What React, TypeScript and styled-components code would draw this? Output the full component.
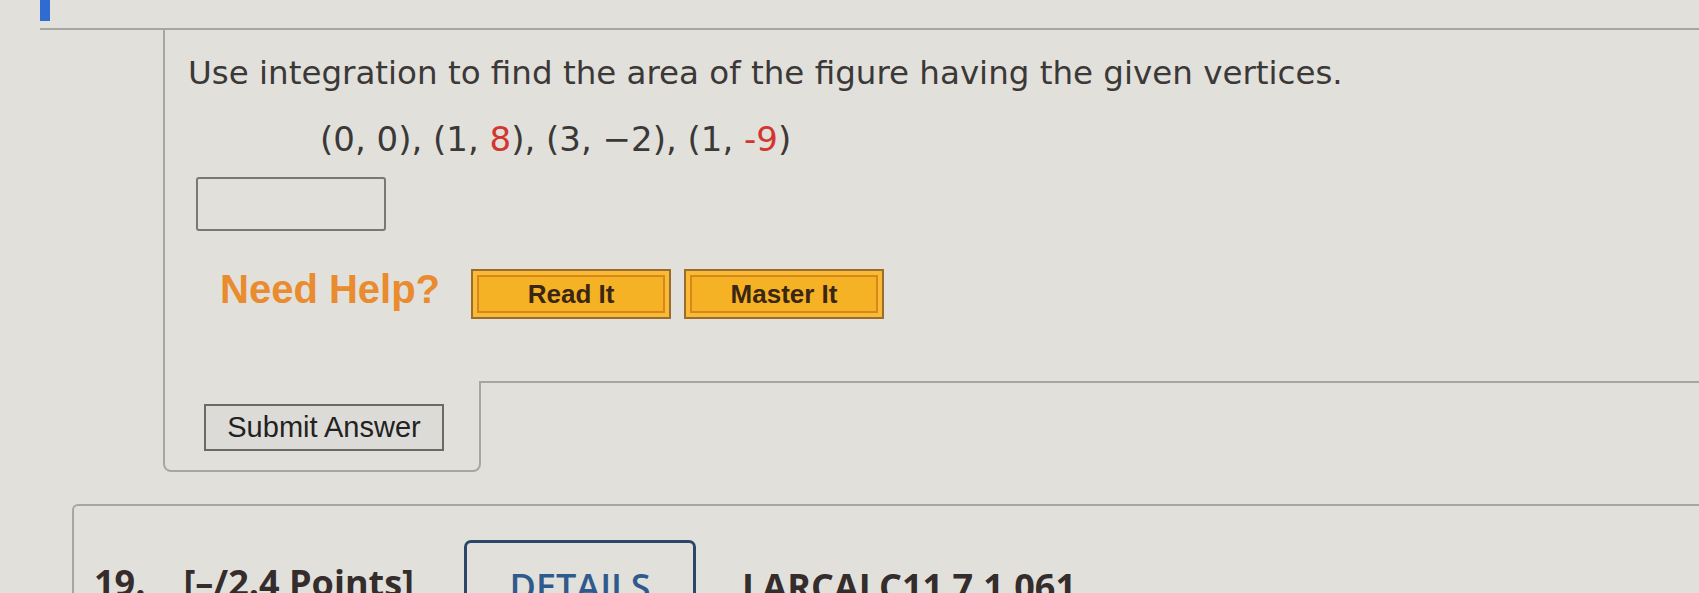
import styled, { createGlobalStyle } from "styled-components";

const GlobalStyle = createGlobalStyle`
  html, body {
    margin: 0;
    padding: 0;
    background: #e2e0db;
    overflow: hidden;
  }
`;

const Page = styled.div`
  width: 1699px;
  background: #e2e0db;
  display: flex;
  flex-direction: column;

  & > * {
    flex-shrink: 0;
  }
`;

const TopStrip = styled.div`
  height: 28px;
  margin-left: 40px;
  border-bottom: 2px solid #a8a6a2;
  display: flex;
`;

const BlueTab = styled.div`
  width: 10px;
  height: 21px;
  background: #2f6bd0;
`;

const QuestionArea = styled.div`
  margin-left: 163px;
  display: flex;
  flex-direction: column;
`;

const QuestionBody = styled.div`
  border-left: 2px solid #a8a6a2;
  border-bottom: 2px solid #a8a6a2;
  padding: 24px 0 62px 23px;
  display: flex;
  flex-direction: column;
  align-items: flex-start;
  font-family: "DejaVu Sans", Verdana, sans-serif;
  color: #3b3838;
`;

const Prompt = styled.p`
  margin: 0;
  font-size: 32.5px;
  line-height: 1.2;
`;

const Vertices = styled.p`
  margin: 26px 0 0 132px;
  font-size: 34px;
  line-height: 1.2;
`;

const Accent = styled.span`
  color: #d2362e;
`;

const AnswerInput = styled.input`
  margin: 17px 0 0 8px;
  width: 190px;
  height: 54px;
  box-sizing: border-box;
  border: 2px solid #7a7874;
  border-radius: 3px;
  background: transparent;
`;

const HelpRow = styled.div`
  margin: 36px 0 0 32px;
  display: flex;
  align-items: baseline;
  font-family: "Liberation Sans", Arial, sans-serif;
`;

const HelpLabel = styled.span`
  font-size: 40px;
  font-weight: 700;
  color: #e98b2f;
  margin-right: 31px;
`;

const HelpButton = styled.button<{ $width: number }>`
  width: ${(p) => p.$width}px;
  height: 50px;
  margin-right: 13px;
  border: 2px solid #9d6b2c;
  background: #f6b225;
  box-shadow: inset 0 0 0 4px #f7bb35, inset 0 0 0 6px #d9861c;
  font-family: "Liberation Sans", Arial, sans-serif;
  font-size: 26px;
  font-weight: 700;
  color: #3a2614;
  padding: 0;
`;

const SubmitTab = styled.div`
  width: 318px;
  box-sizing: border-box;
  margin-top: -2px;
  background: #e2e0db;
  border: 2px solid #a8a6a2;
  border-top: none;
  border-radius: 0 0 8px 8px;
  padding: 23px 0 19px 39px;
`;

const SubmitButton = styled.button`
  width: 240px;
  height: 47px;
  border: 2px solid #6c6a66;
  background: #dddbd7;
  font-family: "Liberation Sans", Arial, sans-serif;
  font-size: 29px;
  color: #222;
  padding: 0;
`;

const NextQuestion = styled.div`
  margin: 32px 0 0 72px;
  border-top: 2px solid #a8a6a2;
  border-left: 2px solid #a8a6a2;
  border-top-left-radius: 6px;
  padding: 34px 0 0 20px;
  display: flex;
  align-items: flex-start;
  font-family: "Open Sans", sans-serif;
  font-weight: 700;
  font-size: 36px;
  color: #352c2c;
`;

const QuestionNumber = styled.span`
  margin-top: 18px;
  margin-right: 38px;
`;

const Points = styled.span`
  margin-top: 18px;
  margin-right: 50px;
`;

const DetailsButton = styled.div`
  width: 232px;
  height: 90px;
  box-sizing: border-box;
  border: 3px solid #2d4769;
  border-radius: 7px;
  padding-top: 19px;
  text-align: center;
  font-weight: 600;
  font-size: 36px;
  color: #2e5b8c;
  margin-right: 46px;
`;

const Code = styled.span`
  margin-top: 22px;
`;

export default function App() {
  return (
    <>
      <GlobalStyle />
      <Page>
        <TopStrip>
          <BlueTab />
        </TopStrip>
        <QuestionArea>
          <QuestionBody>
            <Prompt>
              Use integration to find the area of the figure having the given
              vertices.
            </Prompt>
            <Vertices>
              (0, 0), (1, <Accent>8</Accent>), (3, −2), (1, <Accent>-9</Accent>)
            </Vertices>
            <AnswerInput type="text" />
            <HelpRow>
              <HelpLabel>Need Help?</HelpLabel>
              <HelpButton $width={200}>Read It</HelpButton>
              <HelpButton $width={200}>Master It</HelpButton>
            </HelpRow>
          </QuestionBody>
          <SubmitTab>
            <SubmitButton>Submit Answer</SubmitButton>
          </SubmitTab>
        </QuestionArea>
        <NextQuestion>
          <QuestionNumber>19.</QuestionNumber>
          <Points>[–/2.4 Points]</Points>
          <DetailsButton>DETAILS</DetailsButton>
          <Code>LARCALC11 7.1.061</Code>
        </NextQuestion>
      </Page>
    </>
  );
}
